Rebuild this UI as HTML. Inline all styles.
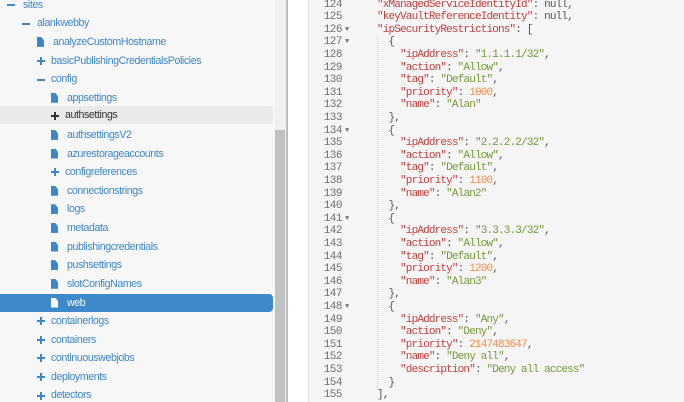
<!DOCTYPE html>
<html><head><meta charset="utf-8"><style>
*{margin:0;padding:0;box-sizing:border-box}
html{overflow:hidden;width:684px;height:402px}
body{width:684px;height:402px;overflow:hidden;background:#f5f5f5;position:relative;font-family:"Liberation Sans",Arial,sans-serif}
#left{position:absolute;left:0;top:0;width:275px;height:402px;background:#f7f7f7;overflow:hidden}
.r{position:absolute;left:0;width:273px;height:18.6px;font-size:10.6px;letter-spacing:-0.4px;color:#3c87c8;line-height:18.6px;white-space:nowrap}
.r.hov{background:#eaeaea;color:#333;border-radius:0 4px 4px 0}
.r.sel{background:#3d89c9;color:#fff;border-radius:0 4px 4px 0}
.m{position:absolute;top:8.5px;width:8px;height:2px;background:#3c87c8}
.p{position:absolute;top:5.3px;width:8px;height:8px}
.p:before{content:"";position:absolute;left:0;top:3px;width:8px;height:2px;background:#3c87c8}
.p:after{content:"";position:absolute;left:3px;top:0;width:2px;height:8px;background:#3c87c8}
.hov .p:before,.hov .p:after{background:#333}
.f{position:absolute;top:4px;width:7px;height:10px;background:#3c87c8;clip-path:polygon(0 0,60% 0,100% 35%,100% 100%,0 100%)}
.sel .f{background:#fff}
.t{position:absolute}
#track{position:absolute;left:275px;top:0;width:11px;height:402px;background:#f0f0f0}
#thumb{position:absolute;left:275px;top:130px;width:10px;height:272px;background:#c1c1c1}
#bd{position:absolute;left:286px;top:0;width:2px;height:402px;background:#bdbdbd}
#wh{position:absolute;left:288px;top:0;width:21px;height:402px;background:#fff;border-right:1px solid #ddd}
#code{position:absolute;left:310px;top:-1.3px;font-family:"Liberation Mono",monospace;font-size:11px;letter-spacing:-0.84px;color:#555;white-space:normal}
#code div{height:12.6px;line-height:12.6px;white-space:pre;position:relative}
.ln{position:absolute;left:0;top:0;width:32px;text-align:right;color:#6f6f6f;letter-spacing:-0.5px}
.fd{position:absolute;left:35px;top:0;font-size:7px;color:#777;line-height:12.6px}
.c{position:absolute;left:67px;top:0}
.k{color:#c2413f}.s{color:#76983a}.n{color:#f08d49}
#guide{position:absolute;left:377px;top:36.5px;height:353px;border-left:1px dotted #ccc}
</style></head><body>
<div id="left">
<div class="r" style="top:-4.3px"><i class="m" style="left:7px"></i><span class="t" style="left:23px">sites</span></div>
<div class="r" style="top:14.3px"><i class="m" style="left:22px"></i><span class="t" style="left:37px">alankwebby</span></div>
<div class="r" style="top:32.9px"><i class="f" style="left:37px"></i><span class="t" style="left:53px">analyzeCustomHostname</span></div>
<div class="r" style="top:51.5px"><i class="p" style="left:37px"></i><span class="t" style="left:51px">basicPublishingCredentialsPolicies</span></div>
<div class="r" style="top:70.1px"><i class="m" style="left:37px"></i><span class="t" style="left:51px">config</span></div>
<div class="r" style="top:88.7px"><i class="f" style="left:51px"></i><span class="t" style="left:67px">appsettings</span></div>
<div class="r hov" style="top:106.3px;height:18px"><i class="p" style="left:51px"></i><span class="t" style="left:65px">authsettings</span></div>
<div class="r" style="top:125.9px"><i class="f" style="left:51px"></i><span class="t" style="left:67px">authsettingsV2</span></div>
<div class="r" style="top:144.5px"><i class="f" style="left:51px"></i><span class="t" style="left:67px">azurestorageaccounts</span></div>
<div class="r" style="top:163.1px"><i class="p" style="left:51px"></i><span class="t" style="left:65px">configreferences</span></div>
<div class="r" style="top:181.7px"><i class="f" style="left:51px"></i><span class="t" style="left:67px">connectionstrings</span></div>
<div class="r" style="top:200.3px"><i class="f" style="left:51px"></i><span class="t" style="left:67px">logs</span></div>
<div class="r" style="top:218.9px"><i class="f" style="left:51px"></i><span class="t" style="left:67px">metadata</span></div>
<div class="r" style="top:237.5px"><i class="f" style="left:51px"></i><span class="t" style="left:67px">publishingcredentials</span></div>
<div class="r" style="top:256.1px"><i class="f" style="left:51px"></i><span class="t" style="left:67px">pushsettings</span></div>
<div class="r" style="top:274.7px"><i class="f" style="left:51px"></i><span class="t" style="left:67px">slotConfigNames</span></div>
<div class="r sel" style="top:293.5px;height:18px"><i class="f" style="left:51px"></i><span class="t" style="left:67px">web</span></div>
<div class="r" style="top:311.9px"><i class="p" style="left:37px"></i><span class="t" style="left:51px">containerlogs</span></div>
<div class="r" style="top:330.5px"><i class="p" style="left:37px"></i><span class="t" style="left:51px">containers</span></div>
<div class="r" style="top:349.1px"><i class="p" style="left:37px"></i><span class="t" style="left:51px">continuouswebjobs</span></div>
<div class="r" style="top:367.7px"><i class="p" style="left:37px"></i><span class="t" style="left:51px">deployments</span></div>
<div class="r" style="top:386.3px"><i class="p" style="left:37px"></i><span class="t" style="left:51px">detectors</span></div>
</div>
<div id="track"></div><div id="thumb"></div><div id="bd"></div><div id="wh"></div>
<div id="guide"></div>
<div id="code">
<div><span class="ln">124</span><span class="c"><span class="k">"xManagedServiceIdentityId"</span>: null,</span></div>
<div><span class="ln">125</span><span class="c"><span class="k">"keyVaultReferenceIdentity"</span>: null,</span></div>
<div><span class="ln">126</span><span class="fd">▼</span><span class="c"><span class="k">"ipSecurityRestrictions"</span>: [</span></div>
<div><span class="ln">127</span><span class="fd">▼</span><span class="c">  {</span></div>
<div><span class="ln">128</span><span class="c">    <span class="k">"ipAddress"</span>: <span class="s">"1.1.1.1/32"</span>,</span></div>
<div><span class="ln">129</span><span class="c">    <span class="k">"action"</span>: <span class="s">"Allow"</span>,</span></div>
<div><span class="ln">130</span><span class="c">    <span class="k">"tag"</span>: <span class="s">"Default"</span>,</span></div>
<div><span class="ln">131</span><span class="c">    <span class="k">"priority"</span>: <span class="n">1000</span>,</span></div>
<div><span class="ln">132</span><span class="c">    <span class="k">"name"</span>: <span class="s">"Alan"</span></span></div>
<div><span class="ln">133</span><span class="c">  },</span></div>
<div><span class="ln">134</span><span class="fd">▼</span><span class="c">  {</span></div>
<div><span class="ln">135</span><span class="c">    <span class="k">"ipAddress"</span>: <span class="s">"2.2.2.2/32"</span>,</span></div>
<div><span class="ln">136</span><span class="c">    <span class="k">"action"</span>: <span class="s">"Allow"</span>,</span></div>
<div><span class="ln">137</span><span class="c">    <span class="k">"tag"</span>: <span class="s">"Default"</span>,</span></div>
<div><span class="ln">138</span><span class="c">    <span class="k">"priority"</span>: <span class="n">1100</span>,</span></div>
<div><span class="ln">139</span><span class="c">    <span class="k">"name"</span>: <span class="s">"Alan2"</span></span></div>
<div><span class="ln">140</span><span class="c">  },</span></div>
<div><span class="ln">141</span><span class="fd">▼</span><span class="c">  {</span></div>
<div><span class="ln">142</span><span class="c">    <span class="k">"ipAddress"</span>: <span class="s">"3.3.3.3/32"</span>,</span></div>
<div><span class="ln">143</span><span class="c">    <span class="k">"action"</span>: <span class="s">"Allow"</span>,</span></div>
<div><span class="ln">144</span><span class="c">    <span class="k">"tag"</span>: <span class="s">"Default"</span>,</span></div>
<div><span class="ln">145</span><span class="c">    <span class="k">"priority"</span>: <span class="n">1200</span>,</span></div>
<div><span class="ln">146</span><span class="c">    <span class="k">"name"</span>: <span class="s">"Alan3"</span></span></div>
<div><span class="ln">147</span><span class="c">  },</span></div>
<div><span class="ln">148</span><span class="fd">▼</span><span class="c">  {</span></div>
<div><span class="ln">149</span><span class="c">    <span class="k">"ipAddress"</span>: <span class="s">"Any"</span>,</span></div>
<div><span class="ln">150</span><span class="c">    <span class="k">"action"</span>: <span class="s">"Deny"</span>,</span></div>
<div><span class="ln">151</span><span class="c">    <span class="k">"priority"</span>: <span class="n">2147483647</span>,</span></div>
<div><span class="ln">152</span><span class="c">    <span class="k">"name"</span>: <span class="s">"Deny all"</span>,</span></div>
<div><span class="ln">153</span><span class="c">    <span class="k">"description"</span>: <span class="s">"Deny all access"</span></span></div>
<div><span class="ln">154</span><span class="c">  }</span></div>
<div><span class="ln">155</span><span class="c">],</span></div>
</div>
</body></html>
